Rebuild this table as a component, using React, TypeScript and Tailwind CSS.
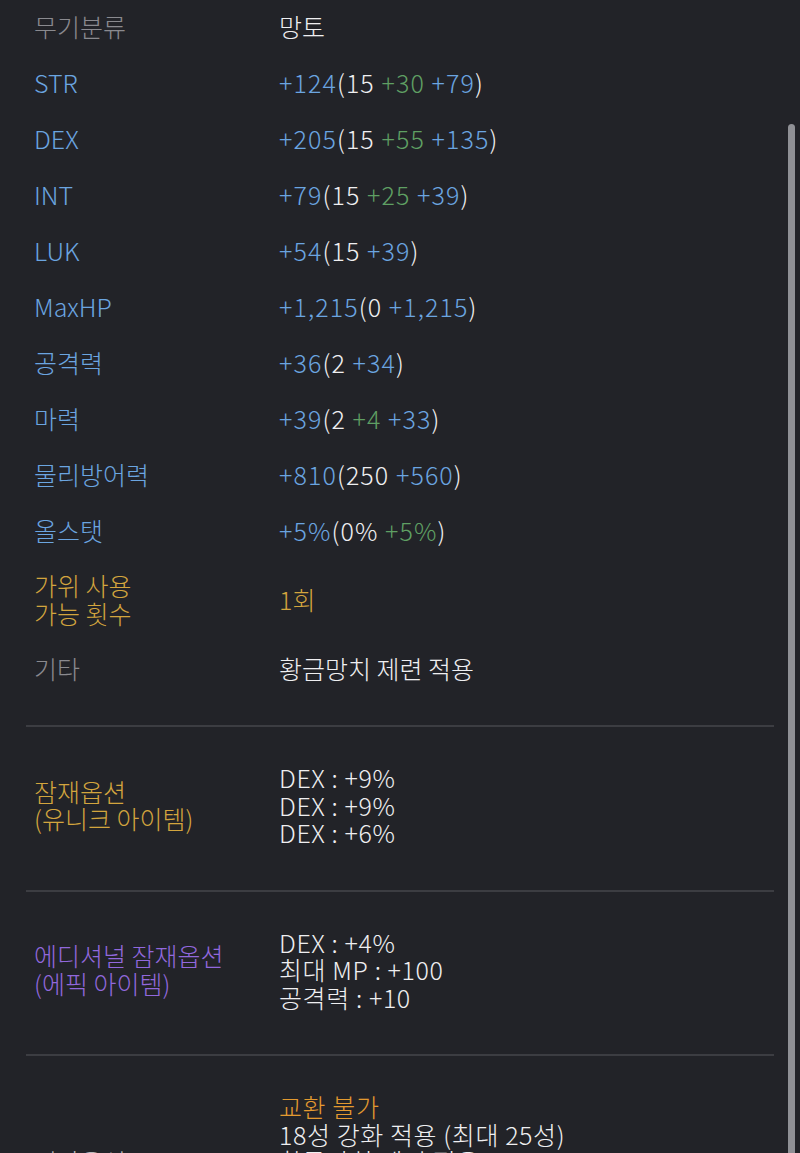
import React from "react";

type Part = { t: string; c?: "b" | "g" | "w" };

const stats: { label: string; parts: Part[] }[] = [
    { label: "STR", parts: [{ t: "+124", c: "b" }, { t: "(15 " }, { t: "+30", c: "g" }, { t: " " }, { t: "+79", c: "b" }, { t: ")" }] },
    { label: "DEX", parts: [{ t: "+205", c: "b" }, { t: "(15 " }, { t: "+55", c: "g" }, { t: " " }, { t: "+135", c: "b" }, { t: ")" }] },
    { label: "INT", parts: [{ t: "+79", c: "b" }, { t: "(15 " }, { t: "+25", c: "g" }, { t: " " }, { t: "+39", c: "b" }, { t: ")" }] },
    { label: "LUK", parts: [{ t: "+54", c: "b" }, { t: "(15 " }, { t: "+39", c: "b" }, { t: ")" }] },
    { label: "MaxHP", parts: [{ t: "+1,215", c: "b" }, { t: "(0 " }, { t: "+1,215", c: "b" }, { t: ")" }] },
    { label: "공격력", parts: [{ t: "+36", c: "b" }, { t: "(2 " }, { t: "+34", c: "b" }, { t: ")" }] },
    { label: "마력", parts: [{ t: "+39", c: "b" }, { t: "(2 " }, { t: "+4", c: "g" }, { t: " " }, { t: "+33", c: "b" }, { t: ")" }] },
    { label: "물리방어력", parts: [{ t: "+810", c: "b" }, { t: "(250 " }, { t: "+560", c: "b" }, { t: ")" }] },
    { label: "올스탯", parts: [{ t: "+5%", c: "b" }, { t: "(0% " }, { t: "+5%", c: "g" }, { t: ")" }] },
];

const partColor = (c?: string) =>
    c === "b" ? "text-[#6ba5e0]" : c === "g" ? "text-[#5f9f63]" : "text-[#efeff1]";

function Row({ label, labelClass, pad = "py-[14px]", children }: { label: React.ReactNode; labelClass: string; pad?: string; children: React.ReactNode }) {
    return (
        <div className={`grid grid-cols-[253px_1fr] items-center ${pad}`}>
            <div className={`pl-2 ${labelClass}`}>{label}</div>
            <div>{children}</div>
        </div>
    );
}

function Section({ label, labelClass, lines }: { label: React.ReactNode; labelClass: string; lines: React.ReactNode[] }) {
    return (
        <div className="grid grid-cols-[253px_1fr] items-center border-t-2 border-[#3c3d42] pt-[37px] pb-[43px] leading-[27.5px]">
            <div className={`pl-2 ${labelClass}`}>{label}</div>
            <div className="text-[#efeff1] tracking-[0.6px]">
                {lines.map((l, i) => (
                    <div key={i}>{l}</div>
                ))}
            </div>
        </div>
    );
}

export default function App() {
    return (
        <div
            className="relative w-[800px] h-[1153px] overflow-hidden bg-[#222328] text-[25px] leading-[28px] font-light"
            style={{ fontFamily: '"Noto Sans CJK KR", "Noto Sans", sans-serif' }}
        >
            <div className="mx-[26px] -mt-[2px]">
                <Row label="무기분류" labelClass="text-[#8a8a8f]">
                    <span className="text-[#efeff1]">망토</span>
                </Row>
                {stats.map((s) => (
                    <Row key={s.label} label={s.label} labelClass="text-[#6ba5e0]">
                        <span className="tracking-[1.1px]">
                            {s.parts.map((p, i) => (
                                <span key={i} className={partColor(p.c)}>
                                    {p.t}
                                </span>
                            ))}
                        </span>
                    </Row>
                ))}
                <Row
                    label={
                        <>
                            가위 사용
                            <br />
                            가능 횟수
                        </>
                    }
                    labelClass="text-[#d3a53e]"
                    pad="py-[13px]"
                >
                    <span className="text-[#d3a53e]">1회</span>
                </Row>
                <Row label="기타" labelClass="text-[#8a8a8f]">
                    <span className="text-[#efeff1]">황금망치 제련 적용</span>
                </Row>

                <div className="h-[29px]" />

                <Section
                    label={
                        <>
                            잠재옵션
                            <br />
                            (유니크 아이템)
                        </>
                    }
                    labelClass="text-[#d3a53e]"
                    lines={["DEX : +9%", "DEX : +9%", "DEX : +6%"]}
                />
                <Section
                    label={
                        <>
                            에디셔널 잠재옵션
                            <br />
                            (에픽 아이템)
                        </>
                    }
                    labelClass="text-[#9168dc]"
                    lines={["DEX : +4%", "최대 MP : +100", "공격력 : +10"]}
                />
                <Section
                    label="기타옵션"
                    labelClass="text-[#b9b9bd]"
                    lines={[
                        <span className="text-[#e39a30]">교환 불가</span>,
                        "18성 강화 적용 (최대 25성)",
                        "황금망치 제련 적용",
                        "가위 사용 가능 횟수 : 1회",
                        "업그레이드 가능 횟수 : 0",
                    ]}
                />
            </div>

            {/* scrollbar thumb overlay */}
            <div className="absolute right-[5px] top-[124px] w-[7px] h-[1040px] rounded-full bg-[#8f9095]" />
        </div>
    );
}
